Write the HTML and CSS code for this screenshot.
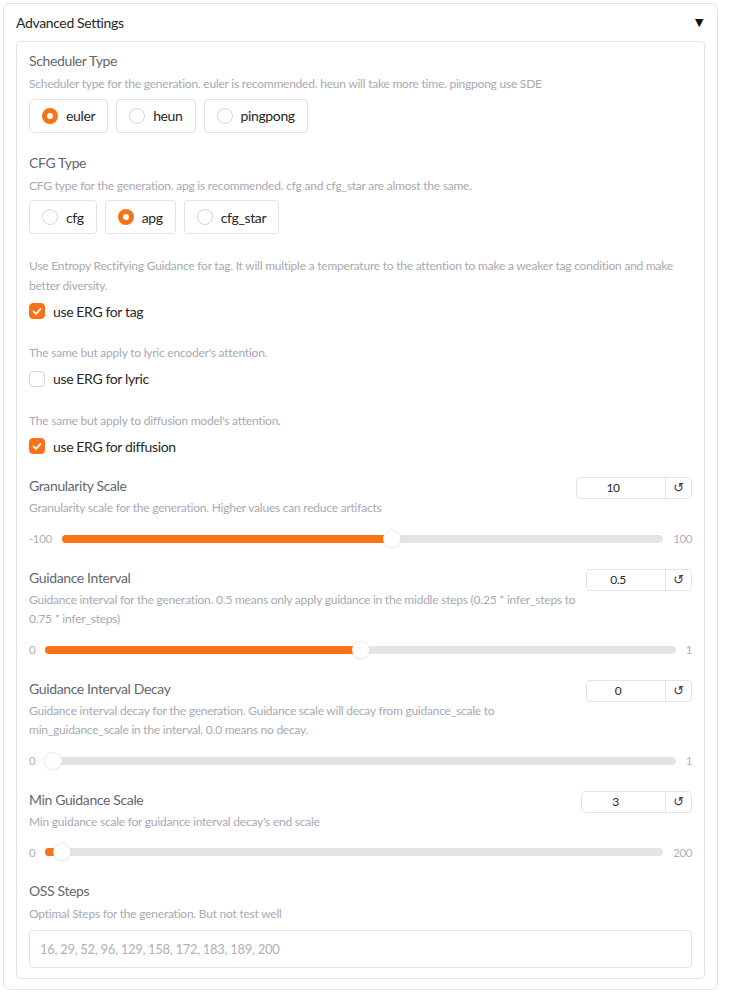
FILE: index.html
```html
<!DOCTYPE html>
<html lang="en">
<head>
    <meta charset="UTF-8">
    <title>Advanced Settings</title>
    <link rel="stylesheet" href="styles.css">
</head>
<body>
<div class="accordion">
    <div class="acc-head">
        <span>Advanced Settings</span>
        <span class="acc-icon">▼</span>
    </div>
    <div class="panel">
        <div class="block">
            <div class="label">Scheduler Type</div>
            <div class="info">Scheduler type for the generation. euler is recommended. heun will take more time. pingpong use SDE</div>
            <div class="radios">
                <label class="radio on"><span class="dot"></span>euler</label>
                <label class="radio"><span class="dot"></span>heun</label>
                <label class="radio"><span class="dot"></span>pingpong</label>
            </div>
        </div>
        <div class="block">
            <div class="label">CFG Type</div>
            <div class="info">CFG type for the generation. apg is recommended. cfg and cfg_star are almost the same.</div>
            <div class="radios">
                <label class="radio"><span class="dot"></span>cfg</label>
                <label class="radio on"><span class="dot"></span>apg</label>
                <label class="radio"><span class="dot"></span>cfg_star</label>
            </div>
        </div>
        <div class="block check-block">
            <div class="info">Use Entropy Rectifying Guidance for tag. It will multiple a temperature to the attention to make a weaker tag condition and make better diversity.</div>
            <label class="check-row">
                <span class="box on"><svg viewBox="0 0 16 16"><polyline points="4,8.5 7,11.2 12,5.5"/></svg></span>use ERG for tag
            </label>
        </div>
        <div class="block check-block">
            <div class="info">The same but apply to lyric encoder's attention.</div>
            <label class="check-row">
                <span class="box"></span>use ERG for lyric
            </label>
        </div>
        <div class="block check-block">
            <div class="info">The same but apply to diffusion model's attention.</div>
            <label class="check-row">
                <span class="box on"><svg viewBox="0 0 16 16"><polyline points="4,8.5 7,11.2 12,5.5"/></svg></span>use ERG for diffusion
            </label>
        </div>
        <div class="block">
            <div class="slider-head">
                <div class="text">
                    <div class="label">Granularity Scale</div>
                    <div class="info">Granularity scale for the generation. Higher values can reduce artifacts</div>
                </div>
                <div class="num w116"><span class="val">10</span><span class="reset">↺</span></div>
            </div>
            <div class="slider">
                <span class="end">-100</span>
                <div class="track" style="--p:.55"><div class="fill"></div><div class="thumb"></div></div>
                <span class="end">100</span>
            </div>
        </div>
        <div class="block">
            <div class="slider-head">
                <div class="text">
                    <div class="label">Guidance Interval</div>
                    <div class="info">Guidance interval for the generation. 0.5 means only apply guidance in the middle steps (0.25 * infer_steps to 0.75 * infer_steps)</div>
                </div>
                <div class="num w106"><span class="val">0.5</span><span class="reset">↺</span></div>
            </div>
            <div class="slider">
                <span class="end">0</span>
                <div class="track" style="--p:.5"><div class="fill"></div><div class="thumb"></div></div>
                <span class="end">1</span>
            </div>
        </div>
        <div class="block">
            <div class="slider-head">
                <div class="text">
                    <div class="label">Guidance Interval Decay</div>
                    <div class="info">Guidance interval decay for the generation. Guidance scale will decay from guidance_scale to min_guidance_scale in the interval. 0.0 means no decay.</div>
                </div>
                <div class="num w106"><span class="val">0</span><span class="reset">↺</span></div>
            </div>
            <div class="slider">
                <span class="end">0</span>
                <div class="track" style="--p:0"><div class="fill"></div><div class="thumb"></div></div>
                <span class="end">1</span>
            </div>
        </div>
        <div class="block">
            <div class="slider-head">
                <div class="text">
                    <div class="label">Min Guidance Scale</div>
                    <div class="info">Min guidance scale for guidance interval decay's end scale</div>
                </div>
                <div class="num w111"><span class="val">3</span><span class="reset">↺</span></div>
            </div>
            <div class="slider">
                <span class="end">0</span>
                <div class="track" style="--p:.015"><div class="fill"></div><div class="thumb"></div></div>
                <span class="end">200</span>
            </div>
        </div>
        <div class="block">
            <div class="label">OSS Steps</div>
            <div class="info">Optimal Steps for the generation. But not test well</div>
            <input class="textbox" type="text" placeholder="16, 29, 52, 96, 129, 158, 172, 183, 189, 200">
        </div>
    </div>
</div>
</body>
</html>
```

FILE: styles.css
```css
* {
    box-sizing: border-box;
}

body {
    margin: 0;
    background: #fff;
    color: #27272a;
    font-family: "Lato", "Liberation Sans", sans-serif;
    letter-spacing: -0.023em;
}

.accordion {
    margin: 3px 20px 0 3px;
    padding: 0 12px 10px;
    border: 1px solid #e4e4e7;
    border-radius: 6px;
}

.acc-head {
    display: flex;
    justify-content: space-between;
    align-items: center;
    height: 37px;
    font-size: 14px;
}

.acc-icon {
    margin-right: 2px;
    font-family: "DejaVu Sans", sans-serif;
    font-size: 11px;
    color: #111;
}

.panel {
    display: flex;
    flex-direction: column;
    gap: 20px;
    padding: 9px 12px 10px;
    border: 1px solid #e4e4e7;
    border-radius: 4px;
}

.label {
    font-size: 14px;
    line-height: 20px;
    color: #66666e;
}

.info {
    margin-top: 3px;
    font-size: 12px;
    line-height: 19.5px;
    letter-spacing: -0.019em;
    color: #a9a9b1;
}

.radios {
    display: flex;
    gap: 8px;
    margin-top: 5px;
}

.radio {
    display: flex;
    align-items: center;
    gap: 8px;
    height: 34px;
    padding: 0 12px;
    border: 1px solid #e4e4e7;
    border-radius: 4px;
    font-size: 14px;
}

.dot {
    width: 16px;
    height: 16px;
    border: 1px solid #d4d4d8;
    border-radius: 50%;
    background: #fff;
}

.radio.on .dot {
    border: 5px solid #f97316;
}

.check-block .info {
    margin-top: 2px;
}

.check-row {
    display: flex;
    align-items: center;
    gap: 8px;
    height: 20px;
    margin-top: 6px;
    font-size: 14px;
}

.box {
    width: 16px;
    height: 16px;
    border: 1px solid #d4d4d8;
    border-radius: 4px;
}

.box.on {
    border-color: #f97316;
    background: #f97316;
}

.box svg {
    display: block;
    width: 14px;
    height: 14px;
    fill: none;
    stroke: #fff;
    stroke-width: 2;
    stroke-linecap: round;
    stroke-linejoin: round;
}

.slider-head {
    display: flex;
    align-items: flex-start;
    gap: 4px;
}

.slider-head .text {
    flex: 1;
}

.slider-head .info {
    margin-top: 2px;
}

.num {
    display: flex;
    height: 22px;
    margin-top: 1px;
    border: 1px solid #e4e4e7;
    border-radius: 4px;
    font-size: 12px;
    line-height: 20px;
}

.num .val {
    flex: 1;
    padding-right: 16px;
    text-align: center;
}

.num .reset {
    width: 26px;
    border-left: 1px solid #e4e4e7;
    text-align: center;
    font-family: "DejaVu Sans", sans-serif;
    font-size: 13px;
    color: #3f3f46;
}

.w116 { width: 116px; }
.w106 { width: 106px; }
.w111 { width: 111px; }

.slider {
    display: flex;
    align-items: center;
    gap: 10px;
    height: 18px;
    margin-top: 12px;
}

.slider .end {
    font-size: 11.5px;
    letter-spacing: -0.4px;
    color: #b0b0b7;
}

.track {
    position: relative;
    flex: 1;
    height: 8px;
    border-radius: 4px;
    background: #e4e4e7;
}

.fill {
    position: absolute;
    top: 0;
    bottom: 0;
    left: 0;
    width: calc(8px + (100% - 16px) * var(--p));
    border-radius: 4px;
    background: #f97316;
}

.thumb {
    position: absolute;
    top: 50%;
    left: calc((100% - 16px) * var(--p));
    width: 16px;
    height: 16px;
    margin-top: -8px;
    border-radius: 50%;
    background: #fff;
    box-shadow: 0 0 0 1px #ececee, 0 1px 3px rgba(0, 0, 0, .12);
}

.textbox {
    display: block;
    width: 100%;
    height: 38px;
    margin-top: 6px;
    padding: 0 10px;
    border: 1px solid #e4e4e7;
    border-radius: 4px;
    font-family: inherit;
    font-size: 13px;
    letter-spacing: -0.023em;
    outline: none;
}

.textbox::placeholder {
    color: #b0b0b7;
}
```
